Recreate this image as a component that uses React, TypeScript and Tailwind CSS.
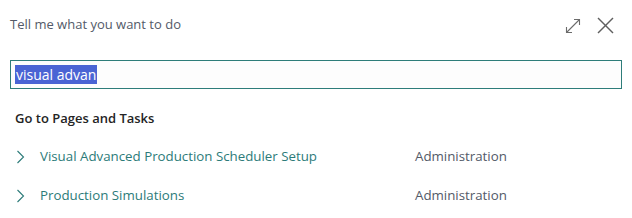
import React from "react";

function ExpandIcon() {
  return (
    <svg width="16" height="16" viewBox="0 0 16 16" fill="none" stroke="#6b6b6b" strokeWidth="1.1">
      <path d="M1.5 14.5 L14.5 1.5" />
      <path d="M9 1.5 H14.5 V7" />
      <path d="M1.5 9 V14.5 H7" />
    </svg>
  );
}

function CloseIcon() {
  return (
    <svg width="17" height="17" viewBox="0 0 17 17" fill="none" stroke="#5f5f5f" strokeWidth="1.4">
      <path d="M1 1 L16 16" />
      <path d="M16 1 L1 16" />
    </svg>
  );
}

function Chevron() {
  return (
    <svg width="9" height="14" viewBox="0 0 9 14" fill="none" stroke="#2c7b79" strokeWidth="1.1">
      <path d="M1.5 1 L7.5 7 L1.5 13" />
    </svg>
  );
}

const rows = [
  { name: "Visual Advanced Production Scheduler Setup", cat: "Administration" },
  { name: "Production Simulations", cat: "Administration" },
];

export default function App() {
  return (
    <div
      className="w-[632px] h-[218px] bg-white overflow-hidden"
      style={{ fontFamily: '"Open Sans", "Noto Sans", sans-serif' }}
    >
      <div className="flex items-start justify-between pl-[10px] pr-[18px] pt-[15px]">
        <div className="text-[13px] leading-[18px] text-[#535a68]">Tell me what you want to do</div>
        <div className="flex items-center gap-[16px] pt-[2px]">
          <ExpandIcon />
          <CloseIcon />
        </div>
      </div>
      <div className="mt-[26px] ml-[10px] w-[612px] h-[29px] border border-[#2e7d7a] bg-[#fdfdfd] flex items-center pl-[4px]">
        <span className="bg-[#4a64d4] text-white text-[14px] leading-[19px] px-[1px]">visual advan</span>
      </div>
      <div className="pl-[15px] pt-[20px] text-[13px] leading-[19px] font-semibold text-[#242424]">
        Go to Pages and Tasks
      </div>
      <div className="mt-[9px] flex flex-col">
        {rows.map((r) => (
          <div key={r.name} className="flex items-center h-[39px]">
            <div className="w-[40px] pl-[16px] flex items-center">
              <Chevron />
            </div>
            <div className="w-[375px] text-[13.3px] text-[#2c7b79]">{r.name}</div>
            <div className="text-[13.3px] text-[#535a68]">{r.cat}</div>
          </div>
        ))}
      </div>
    </div>
  );
}
